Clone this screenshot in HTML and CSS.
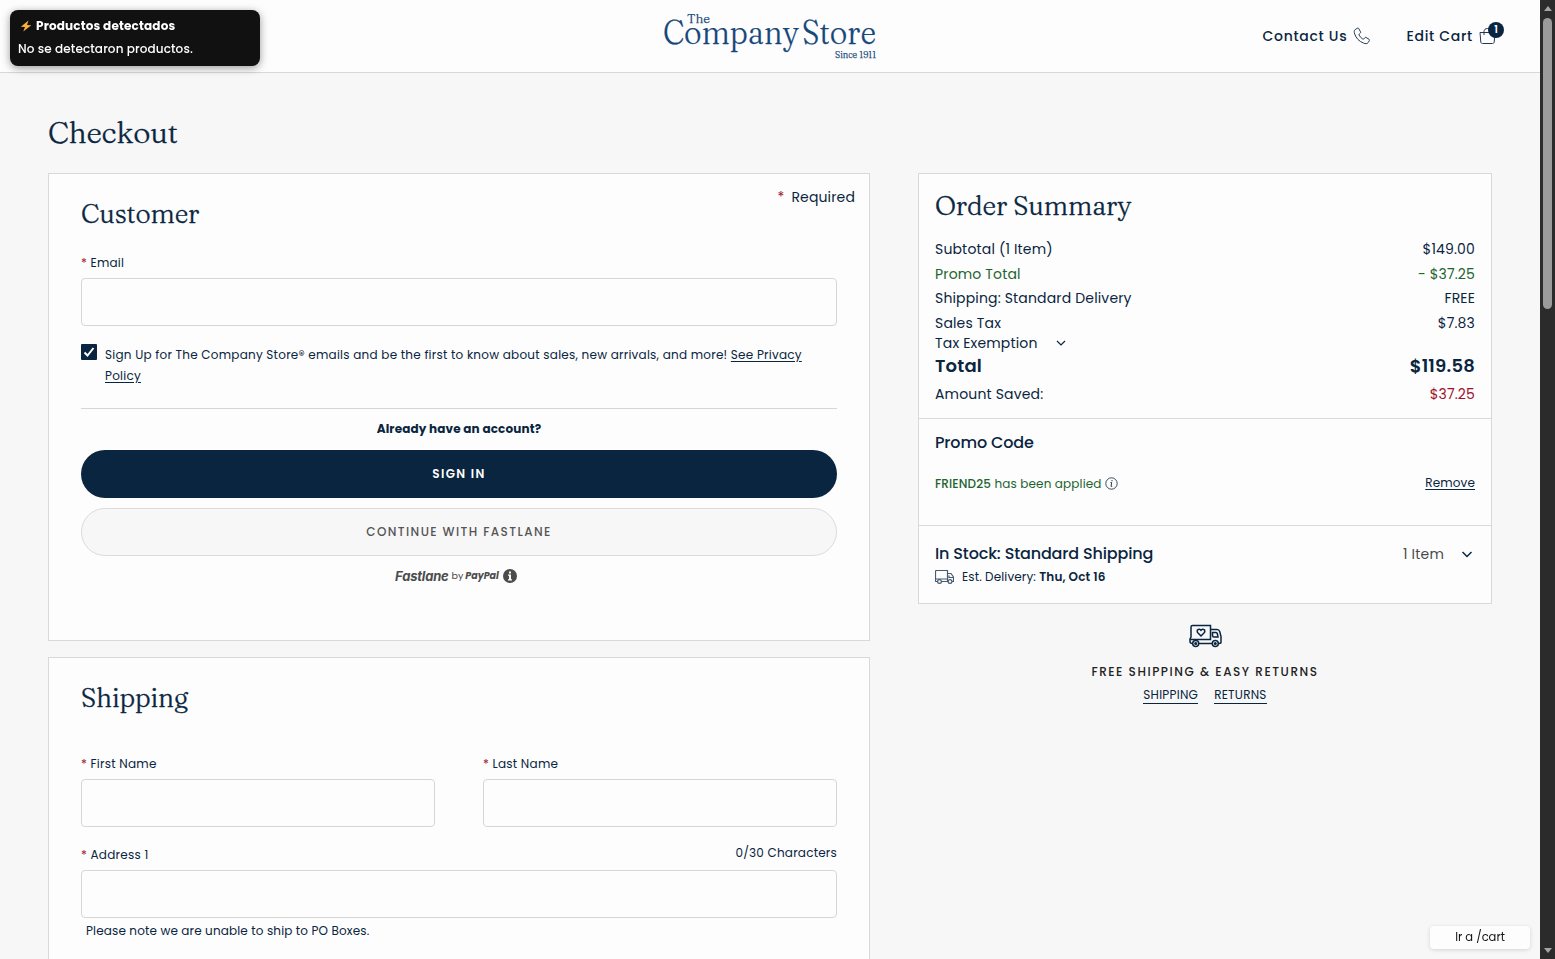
FILE: index.html
```html
<!DOCTYPE html>
<html lang="en">
<head>
    <meta charset="UTF-8">
    <meta name="viewport" content="width=device-width, initial-scale=1.0">
    <title>Checkout | The Company Store</title>
    <link rel="stylesheet" href="styles.css">
</head>
<body>
    <div class="page">
        <header class="header">
            <svg class="logo" width="216" height="56" viewBox="0 0 216 56" role="img" aria-label="The Company Store">
                <text x="23" y="16" font-size="13" textLength="23" lengthAdjust="spacingAndGlyphs">The</text>
                <text x="-1" y="37" font-size="33" textLength="136" lengthAdjust="spacingAndGlyphs">Company</text>
                <text x="138" y="37" font-size="33" textLength="74" lengthAdjust="spacingAndGlyphs">Store</text>
                <text x="171" y="51" font-size="9.5" textLength="41" lengthAdjust="spacingAndGlyphs">Since 1911</text>
            </svg>
            <nav class="nav">
                <a class="nav-link" href="#">Contact Us
                    <svg width="18" height="18" viewBox="0 0 18 18" fill="none" stroke="#24384f" stroke-width="1">
                        <path d="M4.4 1.2 2.3 2.5C1 3.4 1 5 1.700 7c1.400 4.200 4.400 7.300 8.600 9 2.200.9 4 .9 4.900-.5l1.200-2c.3-.5.100-.9-.3-1.200l-3-1.800c-.5-.3-1-.2-1.300.2l-1 1.200c-.3.3-.7.4-1.100.1-1.500-1-2.800-2.300-3.600-3.900-.2-.4-.1-.8.2-1.100l1-.9c.4-.4.5-.8.2-1.300L5.700 1.500c-.3-.5-.8-.6-1.300-.3z"/>
                    </svg>
                </a>
                <a class="nav-link" href="#">Edit Cart
                    <span class="bag">
                        <svg width="17" height="18" viewBox="0 0 17 18" fill="none" stroke="#24384f" stroke-width="1">
                            <path d="M1 5.500h15l-.8 9.500c-.1 1-.8 1.500-1.700 1.500h-10c-1 0-1.600-.6-1.700-1.500zM5 8V4.500C5 2.500 6.500 1.500 8.500 1.500S12 2.500 12 4.500V8"/>
                        </svg>
                        <span class="badge">1</span>
                    </span>
                </a>
            </nav>
        </header>

        <main class="main">
            <h1>Checkout</h1>
            <div class="columns">
                <div class="forms">
                    <section class="card customer">
                        <div class="card-head">
                            <h2>Customer</h2>
                            <p class="required"><span class="star">*</span> Required</p>
                        </div>
                        <label class="label" for="email"><span class="star">*</span> Email</label>
                        <input class="input" id="email" type="email">
                        <div class="signup">
                            <span class="checkbox">
                                <svg width="16" height="16" viewBox="0 0 16 16" fill="none" stroke="#fff" stroke-width="2"><path d="M3.500 8.500 6.500 11.500 12.500 4"/></svg>
                            </span>
                            <p>Sign Up for The Company Store® emails and be the first to know about sales, new arrivals, and more! <a href="#">See Privacy<br>Policy</a></p>
                        </div>
                        <p class="already">Already have an account?</p>
                        <button class="btn btn-dark">SIGN IN</button>
                        <button class="btn btn-light">CONTINUE WITH FASTLANE</button>
                        <div class="fastlane">
                            <b class="fl-name">Fastlane</b><span class="fl-by">by</span><b class="fl-pp">PayPal</b>
                            <svg width="14" height="14" viewBox="0 0 14 14"><circle cx="7" cy="7" r="7" fill="#4c4c4c"/><path d="M6 2.500h2v2H6zM5 5.500h3v4.700h1v1.200H5v-1.200h1V6.700H5z" fill="#fff"/></svg>
                        </div>
                    </section>

                    <section class="card shipping">
                        <h2>Shipping</h2>
                        <div class="two">
                            <div>
                                <label class="label" for="first"><span class="star">*</span> First Name</label>
                                <input class="input" id="first" type="text">
                            </div>
                            <div>
                                <label class="label" for="last"><span class="star">*</span> Last Name</label>
                                <input class="input" id="last" type="text">
                            </div>
                        </div>
                        <div class="label-row">
                            <label class="label" for="address"><span class="star">*</span> Address 1</label>
                            <span class="count">0/30 Characters</span>
                        </div>
                        <input class="input" id="address" type="text">
                        <p class="note">Please note we are unable to ship to PO Boxes.</p>
                    </section>
                </div>

                <aside class="side">
                    <div class="card summary">
                        <section class="totals">
                            <h2>Order Summary</h2>
                            <div class="row"><span>Subtotal (1 Item)</span><span>$149.00</span></div>
                            <div class="row green"><span>Promo Total</span><span>- $37.25</span></div>
                            <div class="row"><span>Shipping: Standard Delivery</span><span>FREE</span></div>
                            <div class="row"><span>Sales Tax</span><span>$7.83</span></div>
                            <div class="tax">Tax Exemption
                                <svg width="10" height="6" viewBox="0 0 10 6" fill="none" stroke="#0a2540" stroke-width="1.200"><path d="M1 1l4 4 4-4"/></svg>
                            </div>
                            <div class="row total"><span>Total</span><span>$119.58</span></div>
                            <div class="row saved"><span>Amount Saved:</span><span class="red">$37.25</span></div>
                        </section>
                        <section class="promo">
                            <h3>Promo Code</h3>
                            <div class="promo-row">
                                <span class="applied"><span><b>FRIEND25</b> has been applied</span>
                                    <svg width="13" height="13" viewBox="0 0 13 13" fill="none" stroke="#24384f"><circle cx="6.500" cy="6.500" r="5.700" stroke-width=".9"/><path d="M7 3v1.200M5.500 5.500h1.200L6 9.300h1.200"/></svg>
                                </span>
                                <a href="#">Remove</a>
                            </div>
                        </section>
                        <section class="stock">
                            <div class="stock-row">
                                <h3>In Stock: Standard Shipping</h3>
                                <span class="items">1 Item
                                    <svg width="12" height="7" viewBox="0 0 12 7" fill="none" stroke="#0a2540" stroke-width="1.500"><path d="M1.500 1l4.500 4.500L10.500 1"/></svg>
                                </span>
                            </div>
                            <p class="est">
                                <svg width="19" height="14" viewBox="0 0 19 14" fill="none" stroke="#465a70" stroke-width="1.200"><path d="M2.500 11.500H1.200Q.5 11.500.5 10.800V1.500Q.5.500 1.500.500H12.500V11.500H6.500M12.500 3.500H16L18.500 7V11.500H17M.5 9H12.500M14 5.500V7.500H18"/><circle cx="4.500" cy="11.500" r="1.900"/><circle cx="15" cy="11.500" r="1.900"/></svg>
                                <span>Est. Delivery: <b>Thu, Oct 16</b></span>
                            </p>
                        </section>
                    </div>
                    <div class="perks">
                        <svg width="33" height="24" viewBox="0 0 33 24" fill="none" stroke="#0a2540" stroke-width="1.500"><path d="M3.500 19.500Q1 19.500 1 17.500V15L2 13V3Q2 1.500 3.500 1.500H21.500V15.500H1.500M21.500 5.500H28Q30 5.500 30.700 7.500L32 12.500V18Q32 19.500 30 19.500H29.500M10 19.500H23M23.500 11.500V8.500H27Q28 8.500 28.300 9.500L29 13H25Q23.500 13 23.500 11.500z"/><path d="M12 12 8.800 8.700C6.800 6.500 10 3.500 12 6.200 14 3.500 17.200 6.500 15.200 8.700z"/><circle cx="6.700" cy="19.500" r="3"/><circle cx="6.700" cy="19.500" r=".8"/><circle cx="26.300" cy="19.500" r="3"/><circle cx="26.300" cy="19.500" r=".8"/></svg>
                        <p class="perks-title">FREE SHIPPING &amp; EASY RETURNS</p>
                        <div class="perks-links"><a href="#">SHIPPING</a><a href="#">RETURNS</a></div>
                    </div>
                </aside>
            </div>
        </main>
    </div>

    <div class="scrollbar">
        <span class="arrow up"></span>
        <span class="thumb"></span>
        <span class="arrow down"></span>
    </div>

    <div class="toast">
        <p class="toast-title"><svg width="12" height="12" viewBox="0 0 12 12" fill="#fbb03b"><path d="M8.500.5.800 6.700 5 7 3.300 11.500 11.300 5.300 7 5z"/></svg>Productos detectados</p>
        <p class="toast-text">No se detectaron productos.</p>
    </div>
    <button class="goto">Ir a /cart</button>
</body>
</html>
```

FILE: styles.css
```css
*{
    margin: 0;
    padding: 0;
    box-sizing: border-box;
}
html, body{
    height: 100%;
    overflow: hidden;
}
body{
    display: flex;
    background-color: #f7f7f7;
    color: #0a2540;
    font-family: Poppins, Inter, sans-serif;
    font-size: 14px;
}
a{
    color: inherit;
}
svg{
    flex-shrink: 0;
}
.page{
    flex: 1;
    height: 959px;
    overflow: hidden;
}

/* header */
.header{
    display: grid;
    grid-template-columns: 1fr auto 1fr;
    align-items: center;
    height: 73px;
    padding: 0 44px 0 48px;
    background-color: #fdfdfd;
    border-bottom: 1px solid #d8d8d8;
}
.logo{
    grid-column: 2;
    margin-bottom: 2px;
    overflow: visible;
    font-family: Recoleta, Fraunces, "Liberation Serif", serif;
    font-weight: 300;
    fill: #17477a;
    stroke: #17477a;
    stroke-width: .25px;
}
.nav{
    display: flex;
    justify-content: flex-end;
    gap: 35px;
}
.nav-link{
    display: flex;
    align-items: center;
    gap: 6px;
    font-size: 14px;
    font-weight: 500;
    letter-spacing: .7px;
    text-decoration: none;
}
.bag{
    position: relative;
    display: flex;
}
.badge{
    position: absolute;
    top: -5px;
    left: 9px;
    width: 16px;
    height: 16px;
    border-radius: 50%;
    background-color: #0a2540;
    color: white;
    font-size: 10px;
    font-weight: 600;
    line-height: 16px;
    letter-spacing: 0;
    text-align: center;
}

/* layout */
.main{
    padding: 40px 48px 0;
}
h1, h2{
    font-family: Recoleta, Fraunces, "Liberation Serif", serif;
    font-weight: 300;
    -webkit-text-stroke: .35px #0a2540;
}
h1{
    height: 60px;
    font-size: 30px;
    line-height: 39px;
    letter-spacing: -.2px;
}
h2{
    font-size: 26.5px;
    line-height: 39px;
    letter-spacing: -.1px;
}
.columns{
    display: grid;
    grid-template-columns: 822px 574px;
    gap: 48px;
    align-items: start;
}
.forms{
    display: flex;
    flex-direction: column;
    gap: 16px;
}
.card{
    background-color: #fdfdfd;
    border: 1px solid #d9d9d9;
}

/* forms */
.customer{
    height: 468px;
    padding: 0 32px;
}
.card-head{
    display: flex;
    justify-content: space-between;
    height: 79px;
    padding-top: 13px;
}
.card-head h2{
    margin-top: 7px;
}
.required{
    margin-right: -18px;
    font-size: 14px;
    line-height: 20px;
    letter-spacing: .14px;
}
.required .star{
    margin-right: 3px;
}
.star{
    color: #a01028;
}
.label{
    display: block;
    margin-bottom: 5px;
    font-size: 12px;
    line-height: 20px;
    letter-spacing: .24px;
}
.input{
    display: block;
    width: 100%;
    height: 48px;
    border: 1px solid #d6d6d6;
    border-radius: 4px;
    background-color: transparent;
}
.signup{
    display: flex;
    gap: 8px;
    height: 83px;
    padding-top: 18px;
    border-bottom: 1px solid #d6d6d6;
    font-size: 12px;
    line-height: 21px;
    letter-spacing: .235px;
    white-space: nowrap;
}
.signup a{
    text-underline-offset: 2px;
}
.checkbox{
    width: 16px;
    height: 16px;
    border-radius: 1px;
    background-color: #0a2540;
}
.checkbox svg{
    display: block;
}
.already{
    margin: 10px 0 11px;
    font-size: 12px;
    font-weight: 700;
    line-height: 20px;
    letter-spacing: .12px;
    text-align: center;
}
.btn{
    display: block;
    width: 100%;
    height: 48px;
    margin-bottom: 10px;
    border: 0;
    border-radius: 24px;
    font: inherit;
    font-size: 12px;
    letter-spacing: 1.42px;
}
.btn-dark{
    background-color: #0a2540;
    color: white;
    font-weight: 600;
}
.btn-light{
    background-color: #f7f7f7;
    border: 1px solid #dcdcdc;
    color: #555;
    font-weight: 500;
}
.fastlane{
    display: flex;
    align-items: center;
    justify-content: center;
    height: 20px;
    padding-right: 6px;
    color: #4c4c4c;
}
.fl-name{
    font-family: Inter, sans-serif;
    font-size: 13px;
    font-style: italic;
    letter-spacing: -.2px;
}
.fl-by{
    margin: 0 2px 0 3px;
    font-size: 9.5px;
}
.fl-pp{
    margin-right: 4px;
    font-size: 9.5px;
    font-style: italic;
}
.shipping{
    height: 500px;
    padding: 20px 32px 0;
}
.two{
    display: grid;
    grid-template-columns: 1fr 1fr;
    gap: 48px;
    margin: 37px 0 18px;
}
.label-row{
    display: flex;
    justify-content: space-between;
}
.count{
    margin-top: -2px;
    font-size: 12px;
    line-height: 20px;
    letter-spacing: .2px;
}
.note{
    margin-top: 3px;
    padding-left: 5px;
    font-size: 12px;
    line-height: 20px;
    letter-spacing: .14px;
}

/* order summary */
.summary{
    height: 431px;
}
.totals{
    height: 245px;
    padding: 12px 16px 0;
    border-bottom: 1px solid #d9d9d9;
}
.totals h2{
    margin-bottom: 12px;
}
.row{
    display: flex;
    justify-content: space-between;
    height: 24.6px;
    line-height: 24.6px;
    letter-spacing: .16px;
}
.green{
    color: #1d6430;
}
.red{
    color: #a01028;
}
.tax{
    display: flex;
    align-items: center;
    gap: 18px;
    height: 16px;
    line-height: 16px;
    letter-spacing: .17px;
}
.total{
    height: 29px;
    line-height: 30px;
    font-size: 18px;
    font-weight: 600;
    letter-spacing: .2px;
}
.saved{
    line-height: 28px;
}
h3{
    font-size: 16px;
    font-weight: 500;
    line-height: 24px;
    letter-spacing: -.15px;
}
.promo{
    height: 107px;
    padding: 12px 16px 0;
    border-bottom: 1px solid #d9d9d9;
}
.promo-row{
    display: flex;
    justify-content: space-between;
    margin-top: 19px;
    font-size: 12px;
    line-height: 20px;
    letter-spacing: .14px;
}
.promo-row a{
    margin-top: -1px;
    text-underline-offset: 2px;
}
.applied{
    display: flex;
    align-items: center;
    gap: 3px;
    color: #1d6430;
}
.applied svg{
    margin-bottom: 2px;
}
.applied b{
    font-weight: 500;
}
.stock{
    padding: 16px 16px 0;
}
.stock-row{
    display: flex;
    justify-content: space-between;
}
.items{
    display: flex;
    align-items: center;
    gap: 17px;
    padding-right: 2px;
    color: #4a4a4a;
    letter-spacing: .2px;
}
.est{
    display: flex;
    align-items: center;
    gap: 4px;
    font-size: 12px;
    line-height: 22px;
    letter-spacing: .12px;
}
.est svg{
    margin-right: 4px;
}
.est b{
    font-weight: 600;
}
.perks{
    display: flex;
    flex-direction: column;
    align-items: center;
    padding-top: 20px;
}
.perks-title{
    margin-top: 14px;
    color: #222;
    font-size: 12px;
    font-weight: 500;
    line-height: 20px;
    letter-spacing: 1.55px;
}
.perks-links{
    display: flex;
    gap: 16px;
    margin-top: 4px;
}
.perks-links a{
    border-bottom: 1px solid #0a2540;
    font-size: 12px;
    line-height: 17px;
    letter-spacing: .24px;
    text-decoration: none;
}

/* scrollbar */
.scrollbar{
    display: flex;
    flex-direction: column;
    align-items: center;
    width: 15px;
    height: 959px;
    padding: 6px 0;
    background-color: #2b2b2b;
}
.thumb{
    width: 9px;
    height: 291px;
    margin: 7px 0 auto;
    border-radius: 5px;
    background-color: #9b9b9b;
}
.arrow{
    border: 4.5px solid transparent;
}
.up{
    border-top: 0;
    border-bottom: 5px solid #a5a5a5;
}
.down{
    border-bottom: 0;
    border-top: 5px solid #a5a5a5;
}

/* floating items */
.toast{
    position: fixed;
    top: 10px;
    left: 10px;
    width: 250px;
    height: 56px;
    padding: 5px 8px;
    border-radius: 8px;
    background-color: #111;
    box-shadow: 0 2px 8px rgba(0,0,0,0.4);
    color: white;
    font-size: 12px;
    letter-spacing: .12px;
}
.toast-title{
    display: flex;
    align-items: center;
    gap: 4px;
    padding-left: 2px;
    font-weight: 700;
    line-height: 22px;
    letter-spacing: .16px;
}
.toast-text{
    font-weight: 500;
    line-height: 24px;
}
.goto{
    position: fixed;
    left: 1430px;
    top: 926px;
    width: 100px;
    height: 23px;
    border: 0;
    border-radius: 4px;
    background-color: #fdfdfd;
    box-shadow: 0 1px 4px rgba(0,0,0,0.15);
    color: #111;
    font: inherit;
    font-size: 11.5px;
}
```
